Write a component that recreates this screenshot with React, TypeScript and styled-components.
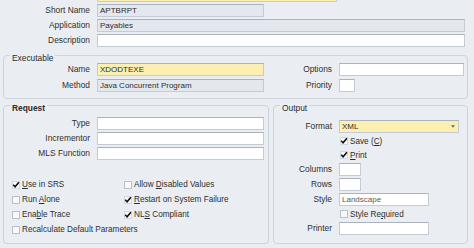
import React from "react";
import styled, { createGlobalStyle } from "styled-components";

const BG = "#eaeef3";

const Global = createGlobalStyle`
  html, body { margin: 0; padding: 0; background: ${BG}; }
  body {
    font-family: "Liberation Sans", Arial, sans-serif;
    color: #2e2e2e;
    overflow: hidden;
  }
`;

const Page = styled.div`
  width: 474px;
  height: 248px;
  overflow: hidden;
  box-sizing: border-box;
  padding: 0 6px 0 3px;
  display: flex;
  flex-direction: column;
`;

const FormGrid = styled.div<{ $cols: string; $top?: number }>`
  display: grid;
  grid-template-columns: ${(p) => p.$cols};
  column-gap: 7px;
  row-gap: 2px;
  grid-auto-rows: 13px;
  margin-top: ${(p) => p.$top ?? 0}px;
`;

const Label = styled.div`
  font-size: 8.4px;
  line-height: 13px;
  text-align: right;
  white-space: nowrap;
  color: #2e2e2e;
`;

type Tone = "normal" | "readonly" | "required";

const Field = styled.div<{ $w?: number; $tone?: Tone; $muted?: boolean }>`
  box-sizing: border-box;
  height: 13px;
  width: ${(p) => (p.$w ? `${p.$w}px` : "100%")};
  border: 1px solid #c4cbd4;
  border-top-color: #a9b2bd;
  background: ${(p) =>
    p.$tone === "required" ? "#fbf0b1" : p.$tone === "readonly" ? "#e3e8ee" : "#ffffff"};
  font-size: 8px;
  line-height: 11px;
  padding-left: 2px;
  color: ${(p) => (p.$muted ? "#5a5a5a" : "#2e2e2e")};
  white-space: nowrap;
  overflow: hidden;
  display: flex;
  align-items: center;
  justify-content: space-between;
`;

const Panel = styled.section`
  border: 1px solid #cdd4dd;
  border-radius: 4px;
  display: flex;
  flex-direction: column;
  min-width: 0;
`;

const Legend = styled.div<{ $bold?: boolean }>`
  margin: -3px 0 0 6px;
  padding: 0 2px;
  width: fit-content;
  height: 10px;
  line-height: 10px;
  font-size: 8.4px;
  font-weight: ${(p) => (p.$bold ? 700 : 400)};
  background: ${BG};
  color: #2a2a2a;
`;

const ExecPanel = styled(Panel)`
  margin-top: 8px;
  padding-bottom: 6px;
`;

const ExecGrid = styled.div`
  display: grid;
  grid-template-columns: 86px 167px 61px 125px;
  column-gap: 7px;
  row-gap: 3px;
  grid-auto-rows: 13px;
`;

const Bottom = styled.div`
  margin-top: 6px;
  display: grid;
  grid-template-columns: 266px 1fr;
  column-gap: 4px;
`;

const RequestPanel = styled(Panel)`
  padding-bottom: 6px;
`;

const CheckGrid = styled.div`
  margin-top: 17px;
  padding-left: 8px;
  display: grid;
  grid-template-columns: 112px 1fr;
  grid-auto-rows: 15px;
`;

const OutputGrid = styled.div`
  display: grid;
  grid-template-columns: 58px 1fr;
  column-gap: 7px;
  row-gap: 2px;
  grid-template-rows: 13px 12px 12px 13px 13px 13px 12px 13px;
  margin-top: 7px;
`;

const CheckRow = styled.label<{ $span?: boolean; $indent?: number }>`
  display: flex;
  align-items: center;
  gap: 2px;
  font-size: 8.2px;
  white-space: nowrap;
  color: #2e2e2e;
  margin-left: ${(p) => p.$indent ?? 0}px;
  grid-column: ${(p) => (p.$span ? "1 / -1" : "auto")};
`;

const Blank = styled.div``;

const Arrow = styled.span`
  width: 0;
  height: 0;
  margin-right: 3px;
  border-left: 2.5px solid transparent;
  border-right: 2.5px solid transparent;
  border-top: 3px solid #7a7f86;
`;

const Box = ({ on }: { on?: boolean }) => (
  <svg width="8" height="8" viewBox="0 0 8 8" style={{ flex: "none" }}>
    <rect x="0.5" y="0.5" width="7" height="7" fill="#f8f9fb" stroke={on ? "#d2d8df" : "#b8c0ca"} />
    {on && (
      <path d="M1.2 3.8 L3.1 5.8 L6.9 1.2" fill="none" stroke="#111" strokeWidth="1.6" />
    )}
  </svg>
);

const Check = ({
  on,
  children,
  span,
  indent,
}: {
  on?: boolean;
  children: React.ReactNode;
  span?: boolean;
  indent?: number;
}) => (
  <CheckRow $span={span} $indent={indent}>
    <Box on={on} />
    <span>{children}</span>
  </CheckRow>
);

export default function App() {
  return (
    <>
      <Global />
      <Page>
        <FormGrid $cols="87px 1fr" $top={-11}>
          <Label>Program</Label>
          <Field $w={240} $tone="required" />
          <Label>Short Name</Label>
          <Field $w={167} $tone="readonly">APTBRPT</Field>
          <Label>Application</Label>
          <Field $w={368} $tone="readonly">Payables</Field>
          <Label>Description</Label>
          <Field $w={368} />
        </FormGrid>

        <ExecPanel>
          <Legend>Executable</Legend>
          <ExecGrid>
            <Label>Name</Label>
            <Field $tone="required">XDODTEXE</Field>
            <Label>Options</Label>
            <Field />
            <Label>Method</Label>
            <Field $tone="readonly">Java Concurrent Program</Field>
            <Label>Priority</Label>
            <Field $w={16} />
          </ExecGrid>
        </ExecPanel>

        <Bottom>
          <RequestPanel>
            <Legend $bold>Request</Legend>
            <FormGrid $cols="86px 167px" $top={4}>
              <Label>Type</Label>
              <Field />
              <Label>Incrementor</Label>
              <Field />
              <Label>MLS Function</Label>
              <Field />
            </FormGrid>
            <CheckGrid>
              <Check on>
                <u>U</u>se in SRS
              </Check>
              <Check>
                Allow <u>D</u>isabled Values
              </Check>
              <Check>
                Run <u>A</u>lone
              </Check>
              <Check on>
                <u>R</u>estart on System Failure
              </Check>
              <Check>
                Ena<u>b</u>le Trace
              </Check>
              <Check on>
                NL<u>S</u> Compliant
              </Check>
              <Check span>Recalculate Default Parameters</Check>
            </CheckGrid>
          </RequestPanel>

          <Panel>
            <Legend>Output</Legend>
            <OutputGrid>
              <Label>Format</Label>
              <Field $w={120} $tone="required">
                XML
                <Arrow />
              </Field>
              <Blank />
              <Check on indent={1}>
                Save (<u>C</u>)
              </Check>
              <Blank />
              <Check on indent={1}>
                <u>P</u>rint
              </Check>
              <Label>Columns</Label>
              <Field $w={22} />
              <Label>Rows</Label>
              <Field $w={22} />
              <Label>Style</Label>
              <Field $w={90} $muted>
                Landscape
              </Field>
              <Blank />
              <Check indent={1}>
                Style Re<u>q</u>uired
              </Check>
              <Label>Printer</Label>
              <Field $w={90} />
            </OutputGrid>
          </Panel>
        </Bottom>
      </Page>
    </>
  );
}
